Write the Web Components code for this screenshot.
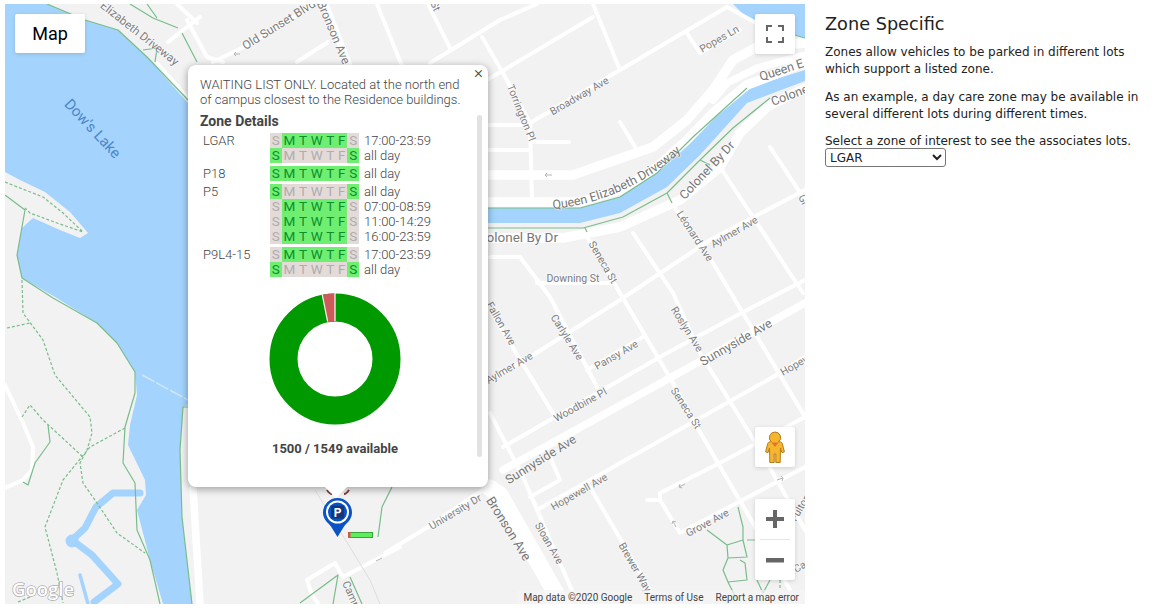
<!DOCTYPE html>
<html>
<head>
<meta charset="utf-8">
<title>Zone Specific</title>
<style>
    body { margin: 4px 0 0 5px; background: #fff; }
    .page { display: flex; gap: 20px; align-items: flex-start; }
</style>
</head>
<body>
<div class="page">
    <campus-map>
        <map-button slot="controls" style="left:10px;top:10px;width:70px;height:39px;">Map</map-button>
        <map-button slot="controls" style="left:750px;top:10px;width:40px;height:40px;">
            <svg width="18" height="18" viewBox="0 0 18 18" fill="none" stroke="#666" stroke-width="2"><path d="M1 6V1h5M12 1h5v5M17 12v5h-5M6 17H1v-5"/></svg>
        </map-button>
        <map-button slot="controls" style="left:750px;top:423px;width:40px;height:40px;">
            <svg width="20" height="32" viewBox="0 0 20 32"><path d="M10 1a5.6 5.6 0 0 1 3.600 9.900h1.400c1.300 0 2 .7 2.400 2l2 8-2.400.8-1.500-4.700-.3 14.500H10.800V23H9.200v8.500H4.800l-.3-14.500L3 21.700.6 20.900l2-8c.4-1.300 1.100-2 2.400-2h1.400A5.600 5.600 0 0 1 10 1z" fill="#f5b52e" stroke="#b67c1c" stroke-width="1"/><path d="M6.500 11.500h7L10 16z" fill="#e8722a"/></svg>
        </map-button>
        <map-zoom slot="controls" style="left:750px;top:495px;"></map-zoom>
        <map-attribution slot="controls"></map-attribution>
        <map-marker slot="controls"></map-marker>
        <zone-popup slot="controls">
            <zone-group name="LGAR">
                <day-row days="0111110" time="17:00-23:59"></day-row>
                <day-row days="1000001" time="all day"></day-row>
            </zone-group>
            <zone-group name="P18">
                <day-row days="1111111" time="all day"></day-row>
            </zone-group>
            <zone-group name="P5">
                <day-row days="1000001" time="all day"></day-row>
                <day-row days="0111110" time="07:00-08:59"></day-row>
                <day-row days="0111110" time="11:00-14:29"></day-row>
                <day-row days="0111110" time="16:00-23:59"></day-row>
            </zone-group>
            <zone-group name="P9L4-15">
                <day-row days="0111110" time="17:00-23:59"></day-row>
                <day-row days="1000001" time="all day"></day-row>
            </zone-group>
        </zone-popup>
    </campus-map>
    <zone-panel></zone-panel>
</div>

<template id="campus-map-tpl">
    <style>
        :host { display: block; position: relative; width: 800px; height: 600px; overflow: hidden; flex: none; background: #f2f2f3; }
        svg.base { display: block; width: 800px; height: 600px; }
        .road { fill: none; stroke: #fff; stroke-linecap: round; stroke-linejoin: round; }
        .path { fill: none; stroke: #78bd89; stroke-width: 1.200; stroke-linejoin: round; }
        .dash { stroke-dasharray: 3 2; }
        text { font-family: Roboto, sans-serif; fill: #7d7d7d; font-size: 10.500px; text-anchor: middle; paint-order: stroke; stroke: rgba(255,255,255,.6); stroke-width: 1.500px; }
        text.big { font-size: 12.500px; fill: #777; }
        text.lake { font-size: 15px; fill: #4d86cb; stroke: none; }
        text.start { text-anchor: start; }
        text.end { text-anchor: end; }
        text.google { font-family: "Open Sans", sans-serif; font-size: 18.500px; font-weight: 600; fill: #fff; stroke: rgba(110,110,110,.55); stroke-width: 1.500px; text-anchor: start; }
    </style>
    <svg class="base" viewBox="5 4 800 600" xmlns="http://www.w3.org/2000/svg">
        <!-- water -->
        <g fill="#a4d4fd">
            <path d="M5 4H47L85 20 118 30 147 57 188 103H240V400L188 405 183 407 180 450 182 517 192 604H163L150 560 137 510 146 495 145 480 128 445 130 425 137 395 135 372 117 343 97 323 55 297 22 278 17 255 22 228 33 218 60 230 80 238 88 233 70 212 45 192 20 180 5 172z"/>
            <path d="M480 208H580L620 197 657 173 693 137 747 88 805 70V81L747 103 700 155 667 187 620 213 580 223H480z"/>
            <path d="M733 4 747 18 770 28 805 38V4z"/>
            <circle cx="72" cy="541" r="6.500"/>
        </g>
        <g fill="none" stroke="#a4d4fd" stroke-linecap="round" stroke-linejoin="round">
            <path stroke-width="7" d="M140 493H113L96 507 85 528 72 540 92 555 118 584 94 602"/>
            <path stroke-width="3.500" d="M80 575 88 604"/>
        </g>
        <path d="M142 375 188 400" stroke="#cfe7fc" stroke-width="1.500" stroke-dasharray="14 2" fill="none"/>

        <!-- roads -->
        <g class="road" stroke-width="9.500">
            <path d="M480 175H573L653 147 687 120 713 90 733 60 757 47 805 43"/>
            <path d="M480 202H580L620 190 657 167 687 140 713 113 747 85 805 63"/>
            <path d="M480 238H563L620 227 680 200 720 167 740 133 767 107 805 88"/>
        </g>
        <g class="road" stroke-width="7.500">
            <path d="M503 470 697 363 805 303"/>
            <path d="M325 4 349 66"/>
            <path d="M713 100 727 83 757 68 805 55"/>
            <path d="M193 488 200 604"/>
        </g>
        <path class="road" stroke-width="17" stroke-linecap="butt" d="M490 488 500 495 563 606"/>
        <g class="road" stroke-width="4">
            <path d="M213 62 252 43 313 5"/>
            <path d="M187 20 207 57 223 62"/>
            <path d="M297 62 328 42"/>
            <path d="M377 4 402 66"/>
            <path d="M428 4 450 48"/>
            <path d="M430 63 500 20 537 4"/>
            <path d="M482 37 503 73 530 123 532 200"/>
            <path d="M168 42 200 17M177 4 197 23"/>
            <path d="M157 63 187 97"/>
            <path d="M5 385 23 423 33 447 32 470 23 480 5 488"/>
            <path d="M530 123 620 70 727 7 760 25"/>
            <path d="M487 80 593 17"/>
            <path d="M593 4 620 70"/>
            <path d="M687 33 700 53 740 30"/>
            <path d="M487 125H530M533 142H569M487 150H530"/>
            <path d="M620 122 637 150"/>
            <path d="M587 237 620 293 673 383 697 427 757 530 790 590"/>
            <path d="M672 203 713 263 805 417"/>
            <path d="M720 167 803 293"/>
            <path d="M770 147 805 200"/>
            <path d="M633 233 673 293 700 353 760 450 805 530"/>
            <path d="M490 380 530 357 620 300 710 240 805 190"/>
            <path d="M537 283H613"/>
            <path d="M490 257H520L550 297 597 387"/>
            <path d="M490 310 510 343 557 420"/>
            <path d="M490 413 523 477 573 593"/>
            <path d="M503 447 667 353 747 310 805 280"/>
            <path d="M587 370 643 337"/>
            <path d="M537 510 773 377 805 357"/>
            <path d="M550 457 560 480 530 497"/>
            <path d="M805 417 720 463 660 493 660 500 680 533 805 467"/>
            <path d="M647 500H660"/>
            <path d="M590 487 650 590"/>
            <path d="M385 553 428 527 472 497 488 487"/>
            <path d="M400 547 343 577 335 563 307 580 312 595 320 606"/>
        </g>
        <path d="M315 490 370 580 380 604" fill="none" stroke="#ddd" stroke-width="1"/>

        <!-- paths -->
        <g class="path">
            <path d="M47 4 85 20 118 30 147 57 188 100"/>
            <path d="M130 4 153 18 178 28M147 4 157 18M143 50 157 48 155 62M182 33 197 62"/>
            <path d="M5 195 25 210 17 255 22 278 53 298 97 323 117 343 135 372 135 393 125 427 123 463 135 483 137 530 150 560 160 604"/>
            <path d="M48 425 50 442 35 463 28 485 23 482"/>
            <path d="M188 407 183 407 180 450 182 517 192 604"/>
            <path d="M392 487 382 507 378 537"/>
            <path d="M300 603 338 575 333 604M350 577 362 604"/>
            <path d="M480 208H580L620 197 657 173 693 137 747 88"/>
            <path d="M770 28 805 38"/>
            <path d="M480 228H583L623 217 667 193 700 160 733 128 770 98"/>
            <path d="M667 193 672 203M700 160 710 165M585 228 587 232"/>
            <path d="M738 507 743 527 743 540 727 545 707 530M727 545 728 558 747 557 743 540M728 558 723 570 728 582 747 580 745 563 740 560M728 582 737 600M757 580 763 593 770 580M747 540 757 540"/>
        </g>
        <g class="path dash">
            <path d="M5 182 20 188 43 197 63 213 83 232 57 223 30 213 25 208"/>
            <path d="M22 280 23 313 43 340 55 375 90 417 92 433 87 450 80 463 83 483 97 503 117 533 145 553"/>
            <path d="M125 428 90 447 63 480 45 527 57 573 63 603"/>
            <path d="M22 417 30 405 43 420 83 457"/>
            <path d="M7 328 30 323M18 602 30 597"/>
            <path d="M780 570 780 590"/>
        </g>

        <!-- one way arrows -->
        <g fill="none" stroke="#b5b5b5" stroke-width="1">
            <path d="M240 54l-6 0m2-2-2 2 2 2"/>
            <path d="M552 175h-7m2-2-2 2 2 2"/>
            <path d="M685 484l-6 3m1-3-1 3 3 1"/>
            <path d="M783 478l-6 2m4-4 2 2-1 3"/>
            <path d="M676 527l-3-6m-1 3 1-3 3 1"/>
            <path d="M382 558l-6 3"/>
        </g>

        <!-- labels -->
        <text class="lake" transform="translate(89 132) rotate(47)">Dow's Lake</text>
        <text class="end" style="font-size:11.500px" transform="translate(175 66) rotate(38)">Elizabeth Driveway</text>
        <text style="font-size:12px" transform="translate(281 28) rotate(-32)">Old Sunset Blvd</text>
        <text class="end" style="font-size:12px" transform="translate(343 65) rotate(67)">Bronson Ave</text>
        <text class="end" transform="translate(434 12) rotate(67)">St</text>
        <text transform="translate(518 114) rotate(68)">Torrington Pl</text>
        <text transform="translate(581 99) rotate(-30)">Broadway Ave</text>
        <text transform="translate(721 42) rotate(-30)">Popes Ln</text>
        <path id="qe-path" fill="none" d="M553 209C600 205 652 182 690 143"/>
        <text class="big start"><textPath href="#qe-path" startOffset="0">Queen Elizabeth Driveway</textPath></text>
        <text class="big end" style="font-size:13.500px" transform="translate(558 242)">Colonel By Dr</text>
        <text class="big" transform="translate(710 173) rotate(-47)">Colonel By Dr</text>
        <text class="big start" transform="translate(761 81) rotate(-18)">Queen E</text>
        <text class="big start" transform="translate(773 106) rotate(-21)">Colonel</text>
        <text transform="translate(600 264) rotate(60)">Seneca St</text>
        <text transform="translate(573 282)">Downing St</text>
        <text transform="translate(692 238) rotate(57)">Léonard Ave</text>
        <text transform="translate(736 235) rotate(-30)">Aylmer Ave</text>
        <text class="start" transform="translate(798 197) rotate(62)">Gl</text>
        <text class="end" transform="translate(510 346) rotate(60)">Fallon Ave</text>
        <text transform="translate(511 371) rotate(-30)">Aylmer Ave</text>
        <text transform="translate(564 339) rotate(58)">Carlyle Ave</text>
        <text transform="translate(618 358) rotate(-30)">Pansy Ave</text>
        <text transform="translate(684 331) rotate(58)">Roslyn Ave</text>
        <text class="big" transform="translate(738 346) rotate(-30)">Sunnyside Ave</text>
        <text class="big" transform="translate(543 463) rotate(-32)">Sunnyside Ave</text>
        <text class="start" transform="translate(783 376) rotate(-30)">Hopewell</text>
        <text transform="translate(582 408) rotate(-29)">Woodbine Pl</text>
        <text transform="translate(683 410) rotate(57)">Seneca St</text>
        <text class="big" style="font-size:13px" transform="translate(505 531) rotate(58)">Bronson Ave</text>
        <text transform="translate(581 495) rotate(-30)">Hopewell Ave</text>
        <text transform="translate(546 545) rotate(60)">Sloan Ave</text>
        <text transform="translate(632 569) rotate(60)">Brewer Way</text>
        <text transform="translate(709 526) rotate(-28)">Grove Ave</text>
        <text class="start" style="font-size:11px" transform="translate(342 583) rotate(66)">Campus</text>
        <text transform="translate(457 515) rotate(-31)">University Dr</text>
        <text class="start" transform="translate(796 573) rotate(-30)">Car</text>
        <text class="start" transform="translate(796 522) rotate(-60)">Fulton</text>
        <text class="google" x="12" y="596">Google</text>
    </svg>
    <slot name="controls"></slot>
</template>

<script>
    // one template per simple element, the rest are built in the class
    function shadowFrom(el, html) {
        const root = el.attachShadow({mode: 'open'});
        root.innerHTML = html;
        return root;
    }

    class CampusMap extends HTMLElement {
        constructor() {
            super();
            const root = this.attachShadow({mode: 'open'});
            root.appendChild(document.getElementById('campus-map-tpl').content.cloneNode(true));
        }
    }

    class MapButton extends HTMLElement {
        constructor() {
            super();
            shadowFrom(this, `
                <style>
                    :host {
                        display: flex; position: absolute; align-items: center; justify-content: center;
                        background: #fff; border-radius: 2px; box-shadow: 0 1px 4px rgba(0,0,0,.15);
                        font: 18px Roboto, sans-serif; color: #000;
                    }
                </style>
                <slot></slot>`);
        }
    }

    class MapZoom extends HTMLElement {
        constructor() {
            super();
            shadowFrom(this, `
                <style>
                    :host {
                        display: flex; flex-direction: column; position: absolute; width: 40px; height: 81px;
                        background: #fff; border-radius: 2px; box-shadow: 0 1px 4px rgba(0,0,0,.15);
                    }
                    .btn { flex: 1; display: flex; align-items: center; justify-content: center; }
                    .sep { height: 1px; margin: 0 5px; background: #e6e6e6; }
                </style>
                <div class="btn"><svg width="18" height="18" viewBox="0 0 18 18"><path d="M7 0h4v7h7v4h-7v7H7v-7H0V7h7z" fill="#666"/></svg></div>
                <div class="sep"></div>
                <div class="btn"><svg width="18" height="18" viewBox="0 0 18 18"><path d="M0 7h18v4.500H0z" fill="#666"/></svg></div>`);
        }
    }

    class MapAttribution extends HTMLElement {
        constructor() {
            super();
            shadowFrom(this, `
                <style>
                    :host {
                        display: flex; position: absolute; right: 0; bottom: 0; height: 14px; gap: 12px;
                        align-items: center; padding: 0 6px; background: rgba(245,245,245,.7);
                        font: 10px Roboto, sans-serif; color: #444; white-space: nowrap;
                    }
                </style>
                <span>Map data ©2020 Google</span><span>Terms of Use</span><span>Report a map error</span>`);
        }
    }

    class MapMarker extends HTMLElement {
        constructor() {
            super();
            shadowFrom(this, `
                <style>
                    :host { display: block; position: absolute; left: 318px; top: 480px; width: 60px; height: 56px; }
                    svg { display: block; }
                    text { font: bold 12px Roboto, sans-serif; fill: #fff; text-anchor: middle; }
                </style>
                <svg width="60" height="56" viewBox="0 0 60 56">
                    <path d="M4 6c2 3 3 4 5 4M26 6c-2 3-3 4-5 4" fill="none" stroke="#8a3b3b" stroke-width="2"/>
                    <path d="M14.500 14A14.500 14.500 0 0 1 29 28.500c0 7-5 10-8 14l-6.500 10.500L8 42.500c-3-4-8-7-8-14A14.500 14.500 0 0 1 14.500 14z" fill="#0b52c4"/>
                    <circle cx="14.500" cy="28" r="11.500" fill="#fff"/>
                    <circle cx="14.500" cy="28" r="9.500" fill="#0b52c4"/>
                    <rect x="8" y="21.500" width="13" height="13" rx="1.500" fill="#14367a"/>
                    <text x="14.500" y="32.500">P</text>
                    <rect x="25.500" y="48.500" width="24" height="5" fill="#5cf05c" stroke="#3aa53a" stroke-width="1"/>
                    <rect x="25" y="48" width="2.500" height="6" fill="#d9534f"/>
                </svg>`);
        }
    }

    class ZonePopup extends HTMLElement {
        constructor() {
            super();
            shadowFrom(this, `
                <style>
                    :host {
                        display: block; position: absolute; left: 183px; top: 61px; width: 300px; height: 422px;
                        box-sizing: border-box; padding: 12px 12px 0;
                        background: #fff; border-radius: 8px; box-shadow: 0 2px 7px 1px rgba(0,0,0,.3);
                        font: 300 13px/15px Roboto, sans-serif; color: #444;
                    }
                    :host::after {
                        content: ""; position: absolute; left: 137px; top: 100%; width: 0; height: 0;
                        border: 11px solid transparent; border-top-color: #fff; border-bottom: 0;
                    }
                    .close { position: absolute; right: 5px; top: 0; font: 300 17px/15px Roboto, sans-serif; color: #444; }
                    .bar { position: absolute; left: 289px; top: 50px; width: 5px; height: 342px; border-radius: 3px; background: #e2e2e2; }
                    p { margin: 0; white-space: nowrap; }
                    h4 { margin: 6px 0 3px; font: 700 14px/17px Roboto, sans-serif; color: #444; }
                    .zones { margin-left: 3px; }
                    zone-donut { margin: 16px 0 0 0; }
                    .count { margin-top: 17px; text-align: center; font: 700 13px/14px Roboto, sans-serif; color: #444; width: 270px; }
                </style>
                <span class="close">×</span>
                <p>WAITING LIST ONLY. Located at the north end<br>of campus closest to the Residence buildings.</p>
                <h4>Zone Details</h4>
                <div class="zones"><slot></slot></div>
                <zone-donut></zone-donut>
                <div class="count">1500 / 1549 available</div>
                <div class="bar"></div>`);
        }
    }

    class ZoneGroup extends HTMLElement {
        constructor() {
            super();
            const root = shadowFrom(this, `
                <style>
                    :host { display: flex; margin-bottom: 3px; }
                    .name { width: 67px; flex: none; line-height: 15px; font-weight: 300; }
                    .rows { display: flex; flex-direction: column; }
                </style>
                <div class="name"></div>
                <div class="rows"><slot></slot></div>`);
            root.querySelector('.name').textContent = this.getAttribute('name');
        }
    }

    class DayRow extends HTMLElement {
        constructor() {
            super();
            const days = this.getAttribute('days');
            const cells = 'SMTWTFS'.split('').map((d, i) =>
                `<span class="${days[i] === '1' ? 'on' : 'off'}">${d}</span>`).join('');
            shadowFrom(this, `
                <style>
                    :host { display: flex; height: 15px; line-height: 15px; white-space: nowrap; }
                    .days { display: flex; width: 89px; flex: none; font-weight: 400; font-size: 13.500px; }
                    span { flex: auto; text-align: center; }
                    .on { background: #6fee72; color: #0b8f2c; }
                    .off { background: #e4dbd9; color: #adadad; }
                    .time { margin-left: 5px; font-weight: 300; }
                </style>
                <div class="days">${cells}</div>
                <div class="time">${this.getAttribute('time')}</div>`);
        }
    }

    class ZoneDonut extends HTMLElement {
        constructor() {
            super();
            // 49 of 1549 taken, the red slice ends at twelve o'clock
            const r = 51.5, len = 2 * Math.PI * r;
            const taken = len * 49 / 1549;
            shadowFrom(this, `
                <style>
                    :host { display: block; width: 270px; height: 132px; margin-left: 0; }
                    svg { display: block; margin: 0 auto; }
                </style>
                <svg width="132" height="132" viewBox="0 0 132 132">
                    <g transform="rotate(-90 66 66)" fill="none" stroke-width="28">
                        <circle cx="66" cy="66" r="${r}" stroke="#009900"/>
                        <circle cx="66" cy="66" r="${r}" stroke="#cf5a5a" stroke-dasharray="${taken} ${len - taken}" stroke-dashoffset="${taken}"/>
                    </g>
                    <path d="M66 0v28" stroke="#fff" stroke-width="1.200"/>
                    <path d="M53.200 1.300 58.600 28.500" stroke="#fff" stroke-width="1.200"/>
                </svg>`);
        }
    }

    class ZonePanel extends HTMLElement {
        constructor() {
            super();
            shadowFrom(this, `
                <style>
                    :host {
                        display: block; width: 330px; padding-top: 10px;
                        font: 12px/17px "DejaVu Sans", Verdana, sans-serif; color: #222;
                    }
                    h3 { margin: 0 0 10px; font: 400 17.700px/20px "DejaVu Sans", Verdana, sans-serif; color: #222; }
                    p { margin: 0 0 11px; white-space: nowrap; }
                    p + p { margin-bottom: 10px; }
                    select {
                        display: block; width: 121px; height: 19px; margin-top: -2px; padding: 0; box-sizing: border-box;
                        background: #fff; border: 1px solid #767676; border-radius: 3px;
                        font: 12px "DejaVu Sans", Verdana, sans-serif; color: #222;
                    }
                </style>
                <h3>Zone Specific</h3>
                <p>Zones allow vehicles to be parked in different lots<br>which support a listed zone.</p>
                <p>As an example, a day care zone may be available in<br>several different lots during different times.</p>
                <div>Select a zone of interest to see the associates lots.</div>
                <select><option>LGAR</option><option>P18</option><option>P5</option><option>P9L4-15</option></select>`);
        }
    }

    customElements.define('campus-map', CampusMap);
    customElements.define('map-button', MapButton);
    customElements.define('map-zoom', MapZoom);
    customElements.define('map-attribution', MapAttribution);
    customElements.define('map-marker', MapMarker);
    customElements.define('zone-popup', ZonePopup);
    customElements.define('zone-group', ZoneGroup);
    customElements.define('day-row', DayRow);
    customElements.define('zone-donut', ZoneDonut);
    customElements.define('zone-panel', ZonePanel);
</script>
</body>
</html>
